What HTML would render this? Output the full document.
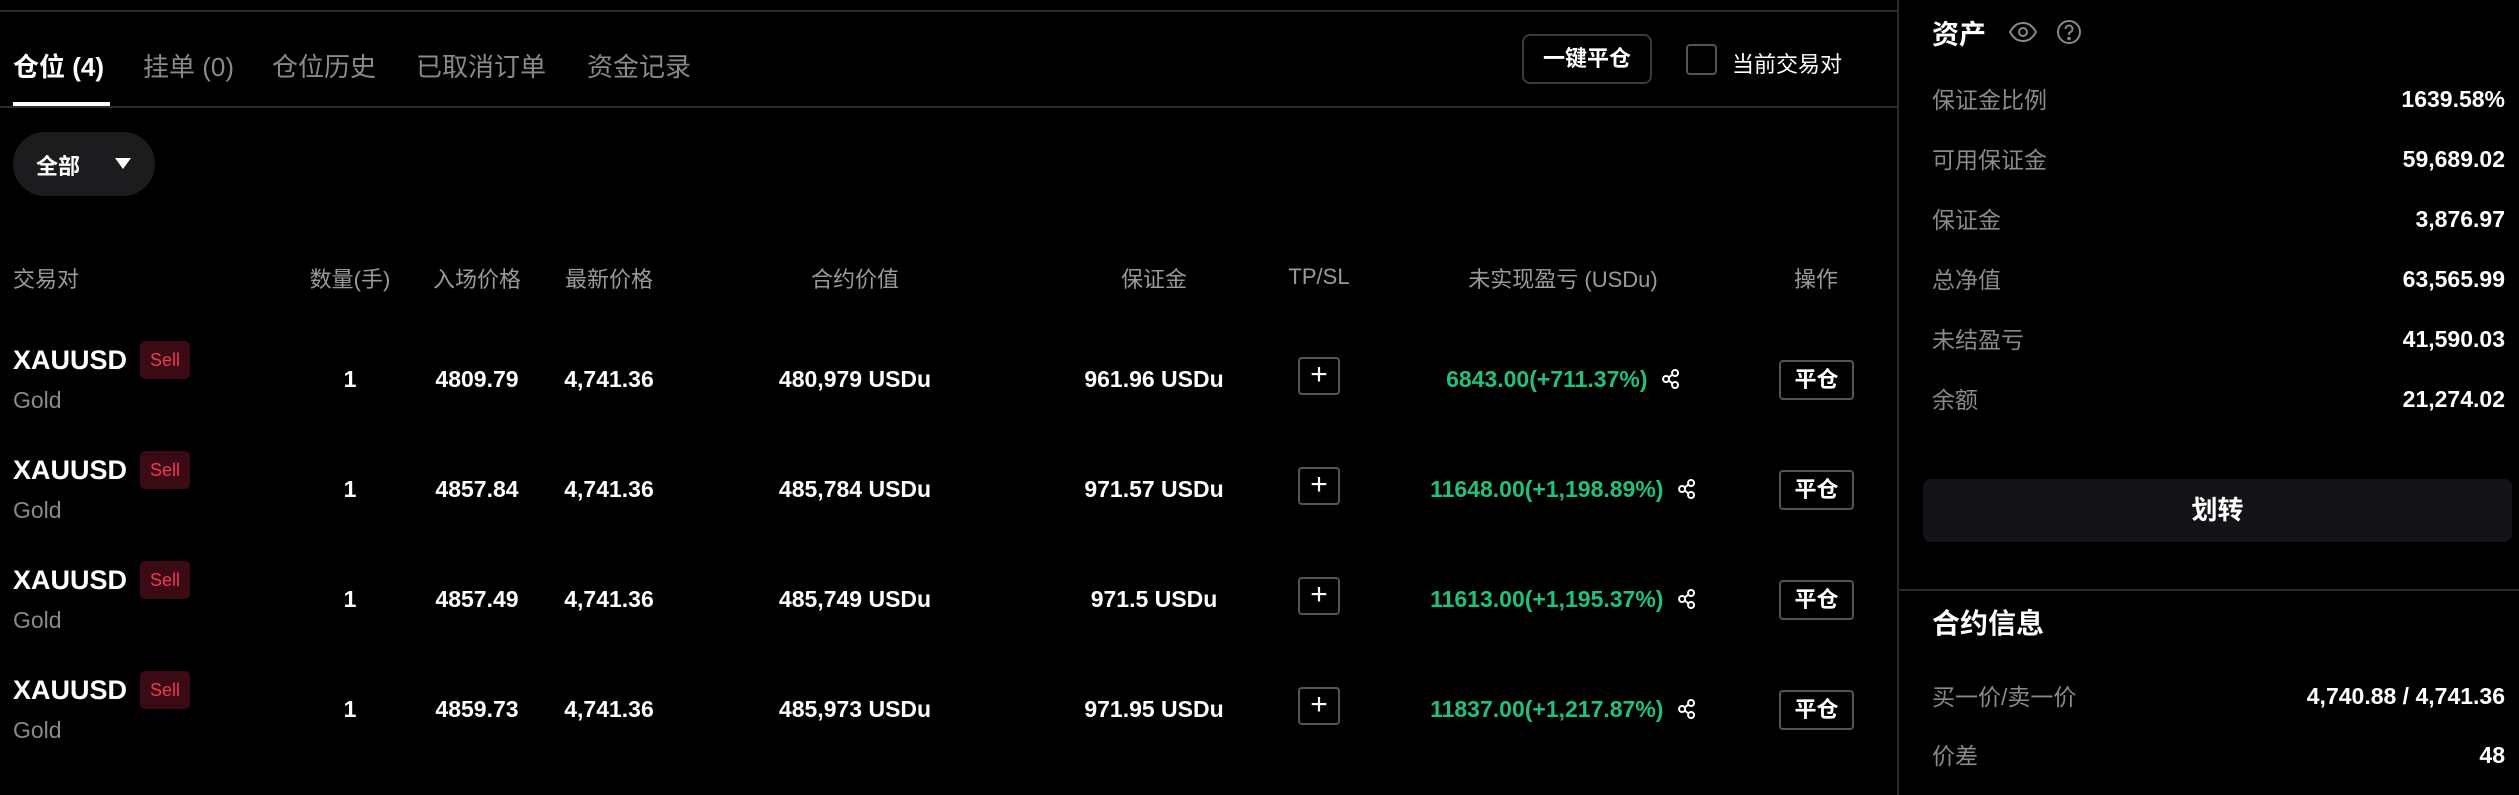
<!DOCTYPE html>
<html><head><meta charset="utf-8"><style>
*{margin:0;padding:0;box-sizing:border-box}
body{width:2519px;height:795px;background:#000;color:#fff;font-family:"Liberation Sans","Noto Sans CJK SC",sans-serif;position:relative;overflow:hidden}
.a{position:absolute;white-space:nowrap}
.c{transform:translateX(-50%)}
.r{transform:translateX(-100%)}
.line{position:absolute;background:#2b2b2b}
.tab{font-size:26px;color:#8a8a8a;top:47px}
.th{font-size:22px;color:#9a9a9a;top:262px}
.v{font-size:23px;font-weight:bold}
.sell{position:absolute;left:140px;width:50px;height:38px;background:#3a0b14;color:#f03a52;font-size:18px;border-radius:5px;text-align:center;line-height:38px}
.plus{position:absolute;left:1298px;width:42px;height:38px;border:2px solid #555;border-radius:4px;text-align:center;line-height:32px;font-size:30px}
.btn{position:absolute;left:1779px;width:75px;height:40px;border:2px solid #555;border-radius:4px;text-align:center;line-height:36px;font-size:22px;font-weight:bold}
.g{color:#22c07a;font-size:23px;font-weight:bold}
.lab{font-size:23px;color:#8a8a8a;left:1932px}
.val{font-size:23px;font-weight:bold;left:2505px;transform:translateX(-100%)}
</style></head><body>
<div class="line" style="left:0;top:10px;width:1898px;height:2px"></div>
<div class="line" style="left:0;top:106px;width:1898px;height:2px"></div>
<div class="line" style="left:1897px;top:0;width:2px;height:795px"></div>
<div class="line" style="left:1898px;top:589px;width:621px;height:2px"></div>

<div class="a tab" style="left:13px;color:#fff;font-weight:bold">仓位 (4)</div>
<div class="a tab" style="left:143px">挂单 (0)</div>
<div class="a tab" style="left:272px">仓位历史</div>
<div class="a tab" style="left:416px">已取消订单</div>
<div class="a tab" style="left:587px">资金记录</div>
<div class="a" style="left:13px;top:102px;width:97px;height:4px;background:#fff"></div>

<div class="a" style="left:1522px;top:34px;width:130px;height:50px;border:2px solid #3a3a3a;border-radius:8px;text-align:center;line-height:46px;font-size:22px;font-weight:bold">一键平仓</div>
<div class="a" style="left:1686px;top:44px;width:31px;height:31px;border:2px solid #555;border-radius:4px"></div>
<div class="a" style="left:1732px;top:47px;font-size:22px">当前交易对</div>

<div class="a" style="left:13px;top:132px;width:142px;height:64px;background:#1c1c1e;border-radius:32px"></div>
<div class="a" style="left:36px;top:149px;font-size:22px;font-weight:bold">全部</div>
<div class="a" style="left:115px;top:158px;width:0;height:0;border-left:8px solid transparent;border-right:8px solid transparent;border-top:11px solid #fff"></div>

<div class="a th" style="left:13px">交易对</div>
<div class="a th c" style="left:350px">数量(手)</div>
<div class="a th c" style="left:477px">入场价格</div>
<div class="a th c" style="left:609px">最新价格</div>
<div class="a th c" style="left:855px">合约价值</div>
<div class="a th c" style="left:1154px">保证金</div>
<div class="a th c" style="left:1319px;top:264px">TP/SL</div>
<div class="a th c" style="left:1563px">未实现盈亏 (USDu)</div>
<div class="a th c" style="left:1816px">操作</div>

<div class="a" style="left:13px;top:345px;font-size:27px;font-weight:bold">XAUUSD</div>
<div class="sell" style="top:341px">Sell</div>
<div class="a" style="left:13px;top:387px;font-size:23px;color:#8a8a8a">Gold</div>
<div class="a v c" style="left:350px;top:366px">1</div>
<div class="a v c" style="left:477px;top:366px">4809.79</div>
<div class="a v c" style="left:609px;top:366px">4,741.36</div>
<div class="a v c" style="left:855px;top:366px">480,979 USDu</div>
<div class="a v c" style="left:1154px;top:366px">961.96 USDu</div>
<div class="plus" style="top:357px">+</div>
<div class="a c" style="left:1563px;top:366px"><span class="g">6843.00(+711.37%)</span> <svg width="18" height="20" viewBox="0 0 18 20" style="margin-left:10px;vertical-align:-2px" fill="none" stroke="#fff" stroke-width="2"><circle cx="13" cy="4" r="3"/><circle cx="4" cy="10" r="3"/><circle cx="13" cy="16" r="3"/><path d="M6.5 8.5l4-3M6.5 11.5l4 3"/></svg></div>
<div class="btn" style="top:360px">平仓</div>

<div class="a" style="left:13px;top:455px;font-size:27px;font-weight:bold">XAUUSD</div>
<div class="sell" style="top:451px">Sell</div>
<div class="a" style="left:13px;top:497px;font-size:23px;color:#8a8a8a">Gold</div>
<div class="a v c" style="left:350px;top:476px">1</div>
<div class="a v c" style="left:477px;top:476px">4857.84</div>
<div class="a v c" style="left:609px;top:476px">4,741.36</div>
<div class="a v c" style="left:855px;top:476px">485,784 USDu</div>
<div class="a v c" style="left:1154px;top:476px">971.57 USDu</div>
<div class="plus" style="top:467px">+</div>
<div class="a c" style="left:1563px;top:476px"><span class="g">11648.00(+1,198.89%)</span> <svg width="18" height="20" viewBox="0 0 18 20" style="margin-left:10px;vertical-align:-2px" fill="none" stroke="#fff" stroke-width="2"><circle cx="13" cy="4" r="3"/><circle cx="4" cy="10" r="3"/><circle cx="13" cy="16" r="3"/><path d="M6.5 8.5l4-3M6.5 11.5l4 3"/></svg></div>
<div class="btn" style="top:470px">平仓</div>

<div class="a" style="left:13px;top:565px;font-size:27px;font-weight:bold">XAUUSD</div>
<div class="sell" style="top:561px">Sell</div>
<div class="a" style="left:13px;top:607px;font-size:23px;color:#8a8a8a">Gold</div>
<div class="a v c" style="left:350px;top:586px">1</div>
<div class="a v c" style="left:477px;top:586px">4857.49</div>
<div class="a v c" style="left:609px;top:586px">4,741.36</div>
<div class="a v c" style="left:855px;top:586px">485,749 USDu</div>
<div class="a v c" style="left:1154px;top:586px">971.5 USDu</div>
<div class="plus" style="top:577px">+</div>
<div class="a c" style="left:1563px;top:586px"><span class="g">11613.00(+1,195.37%)</span> <svg width="18" height="20" viewBox="0 0 18 20" style="margin-left:10px;vertical-align:-2px" fill="none" stroke="#fff" stroke-width="2"><circle cx="13" cy="4" r="3"/><circle cx="4" cy="10" r="3"/><circle cx="13" cy="16" r="3"/><path d="M6.5 8.5l4-3M6.5 11.5l4 3"/></svg></div>
<div class="btn" style="top:580px">平仓</div>

<div class="a" style="left:13px;top:675px;font-size:27px;font-weight:bold">XAUUSD</div>
<div class="sell" style="top:671px">Sell</div>
<div class="a" style="left:13px;top:717px;font-size:23px;color:#8a8a8a">Gold</div>
<div class="a v c" style="left:350px;top:696px">1</div>
<div class="a v c" style="left:477px;top:696px">4859.73</div>
<div class="a v c" style="left:609px;top:696px">4,741.36</div>
<div class="a v c" style="left:855px;top:696px">485,973 USDu</div>
<div class="a v c" style="left:1154px;top:696px">971.95 USDu</div>
<div class="plus" style="top:687px">+</div>
<div class="a c" style="left:1563px;top:696px"><span class="g">11837.00(+1,217.87%)</span> <svg width="18" height="20" viewBox="0 0 18 20" style="margin-left:10px;vertical-align:-2px" fill="none" stroke="#fff" stroke-width="2"><circle cx="13" cy="4" r="3"/><circle cx="4" cy="10" r="3"/><circle cx="13" cy="16" r="3"/><path d="M6.5 8.5l4-3M6.5 11.5l4 3"/></svg></div>
<div class="btn" style="top:690px">平仓</div>

<div class="a" style="left:1932px;top:13px;font-size:27px;font-weight:bold">资产</div>
<svg class="a" style="left:2008px;top:21px" width="30" height="22" viewBox="0 0 30 22" fill="none" stroke="#888" stroke-width="2"><path d="M2 11C6 4 10 2 15 2s9 2 13 9c-4 7-8 9-13 9S6 18 2 11z"/><circle cx="15" cy="11" r="4"/></svg>
<svg class="a" style="left:2056px;top:19px" width="26" height="26" viewBox="0 0 26 26" fill="none" stroke="#888" stroke-width="2"><circle cx="13" cy="13" r="11"/><path d="M9.5 10a3.5 3.5 0 1 1 4.5 3.3c-.8.3-1 .9-1 1.7v1"/><circle cx="13" cy="19.5" r=".8" fill="#888"/></svg>

<div class="a lab" style="top:81px">保证金比例</div><div class="a val" style="top:86px">1639.58%</div>
<div class="a lab" style="top:141px">可用保证金</div><div class="a val" style="top:146px">59,689.02</div>
<div class="a lab" style="top:201px">保证金</div><div class="a val" style="top:206px">3,876.97</div>
<div class="a lab" style="top:261px">总净值</div><div class="a val" style="top:266px">63,565.99</div>
<div class="a lab" style="top:321px">未结盈亏</div><div class="a val" style="top:326px">41,590.03</div>
<div class="a lab" style="top:381px">余额</div><div class="a val" style="top:386px">21,274.02</div>

<div class="a" style="left:1923px;top:479px;width:589px;height:63px;background:#141418;border-radius:8px;text-align:center;line-height:63px;font-size:26px;font-weight:bold">划转</div>

<div class="a" style="left:1932px;top:602px;font-size:28px;font-weight:bold">合约信息</div>
<div class="a lab" style="top:678px">买一价/卖一价</div><div class="a val" style="top:683px">4,740.88 / 4,741.36</div>
<div class="a lab" style="top:737px">价差</div><div class="a val" style="top:742px">48</div>
</body></html>
